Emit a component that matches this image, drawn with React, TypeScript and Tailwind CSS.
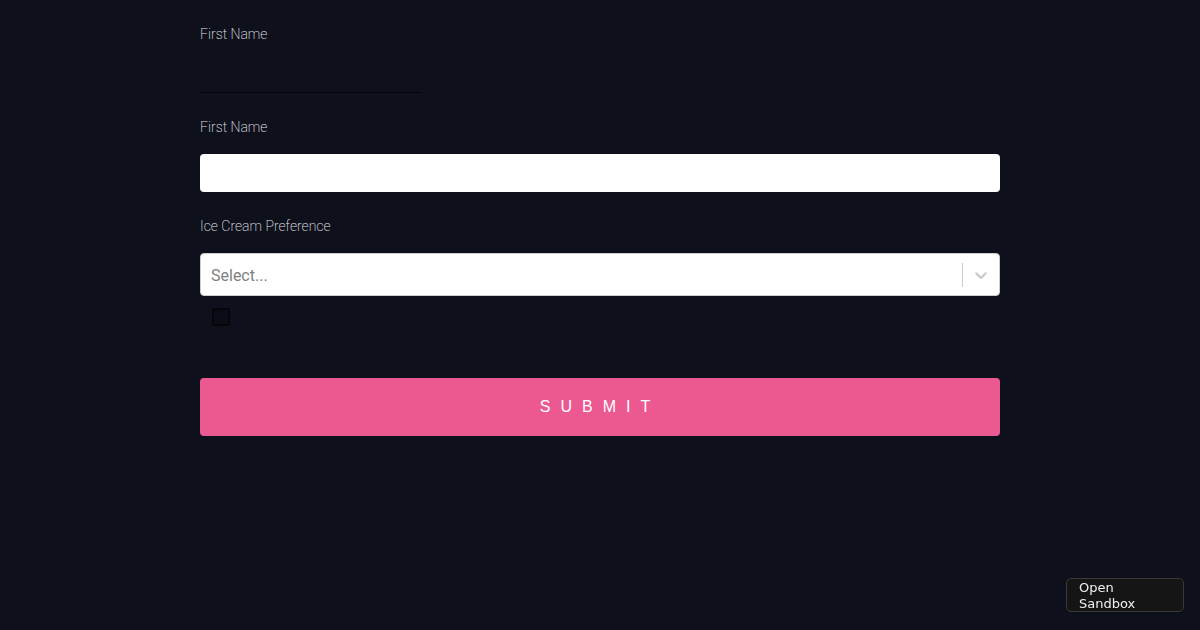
import { useState } from "react";

function App() {
  const [checked, setChecked] = useState(false);

  return (
    <div className="min-h-screen w-full bg-[#0e101c] font-['Roboto',sans-serif]">
      <form className="mx-auto w-[800px] pt-[24px]" onSubmit={(e) => e.preventDefault()}>
        <label className="block text-[14px] leading-[20px] font-extralight text-[#e4e5e8]">First Name</label>
        <input className="mt-[10px] block h-[39px] w-[221px] border-b border-[#05060c] bg-transparent text-white outline-none" />

        <label className="mt-[24px] block text-[14px] leading-[20px] font-extralight text-[#e4e5e8]">First Name</label>
        <input className="mt-[17px] block h-[38px] w-full rounded-[4px] bg-white px-[15px] text-[14px] text-black outline-none" />

        <label className="mt-[24px] block text-[14px] leading-[20px] font-extralight text-[#e4e5e8]">
          Ice Cream Preference
        </label>
        <div className="mt-[17px] flex h-[43px] w-full items-center rounded-[4px] border border-[#cccccc] bg-white">
          <span className="flex-1 pt-[2px] pl-[10px] font-['Roboto',sans-serif] text-[16px] text-[#808080]">Select...</span>
          <span className="h-[24px] w-px bg-[#cccccc]"></span>
          <span className="flex w-[36px] items-center justify-center text-[#cccccc]">
            <svg width="20" height="20" viewBox="0 0 20 20" fill="currentColor">
              <path d="M4.516 7.548c0.436-0.446 1.043-0.481 1.576 0l3.908 3.747 3.908-3.747c0.533-0.481 1.141-0.446 1.574 0 0.436 0.445 0.408 1.197 0 1.615-0.406 0.418-4.695 4.502-4.695 4.502-0.217 0.223-0.502 0.335-0.787 0.335s-0.57-0.112-0.789-0.335c0 0-4.287-4.084-4.695-4.502s-0.436-1.17 0-1.615z" />
            </svg>
          </span>
        </div>

        <div className="mt-[12px] pl-[12px]">
          <button
            type="button"
            onClick={() => setChecked(!checked)}
            className="block h-[18px] w-[18px] rounded-[2px] border-2 border-[#05060a] bg-[#0b0d16]"
          ></button>
        </div>

        <button
          type="submit"
          className="mt-[52px] block h-[58px] w-full rounded-[4px] bg-[#ec5990] font-['Liberation_Sans',sans-serif] text-[16px] uppercase tracking-[10px] text-white"
        >
          Submit
        </button>
      </form>

      <div className="fixed right-[16px] bottom-[18px] flex h-[34px] w-[118px] items-center rounded-[5px] border border-[#3a3a3a] bg-[#151515] pt-[2px] pl-[12px] font-['DejaVu_Sans',sans-serif] text-[13px] leading-[16px] text-[#f0f0f0]">
        Open
        <br />
        Sandbox
      </div>
    </div>
  );
}

export default App;
